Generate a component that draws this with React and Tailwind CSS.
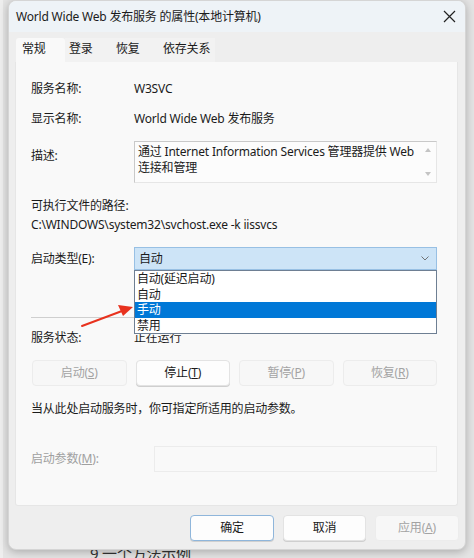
import React from "react";

const font = { fontFamily: '"Noto Sans", "Noto Sans CJK SC", sans-serif' };

function Btn({ children, disabled, primary, className = "" }) {
  return (
    <div
      className={
        "flex items-center justify-center rounded-[4px] border text-[12px] " +
        (disabled
          ? "border-[#ececec] bg-[#f7f7f7] text-[#a3a3a3] "
          : primary
          ? "border-[#8fb6db] bg-[#fdfdfd] text-[#1a1a1a] shadow-[0_1px_0_#d0d0d0] "
          : "border-[#e3e3e3] bg-[#fdfdfd] text-[#1a1a1a] shadow-[0_1px_0_#cfcfcf] ") +
        className
      }
    >
      {children}
    </div>
  );
}

export default function App() {
  return (
    <div
      className="relative h-[558px] w-[474px] overflow-hidden bg-[#e4e4e4] tracking-[-0.2px] text-[#1b1b1b]"
      style={font}
    >
      {/* background fragments */}
      <div className="absolute left-0 top-0 h-full w-[3px] bg-[#eeeeee]" />
      <div className="absolute left-[90px] top-[544px] text-[15px] leading-[18px] text-[#333]">
        9 一个方法示例
      </div>

      {/* window */}
      <div className="relative ml-[8px] flex h-[550px] w-[458px] flex-col overflow-hidden rounded-[8px] border border-[#d5d5d5] bg-[#eeeeee] shadow-[0_2px_8px_rgba(0,0,0,0.25)]">
        {/* title bar */}
        <div className="flex h-[31px] shrink-0 items-center justify-between bg-[#eef3f7] pl-[7px] pr-[9px]">
          <span className="text-[12px] leading-[16px] text-[#1b1b1b]">
            World Wide Web 发布服务 的属性(本地计算机)
          </span>
          <svg width="13" height="13" viewBox="0 0 13 13">
            <path d="M1 1 L12 12 M12 1 L1 12" stroke="#222" strokeWidth="1.2" />
          </svg>
        </div>

        {/* tabs */}
        <div className="ml-[7px] mt-[6px] flex h-[24px] text-[12px]">
          <div className="flex w-[49px] items-center rounded-t-[3px] bg-[#f9f9f9] pb-[2px] pl-[6px]">
            常规
          </div>
          <div className="flex w-[43px] items-center bg-[#f2f2f2] pb-[2px] pl-[4px]">
            登录
          </div>
          <div className="flex w-[47px] items-center bg-[#f2f2f2] pb-[2px] pl-[8px]">
            恢复
          </div>
          <div className="flex w-[60px] items-center bg-[#f2f2f2] pb-[2px] pl-[8px]">
            依存关系
          </div>
        </div>

        {/* panel */}
        <div className="relative ml-[6px] h-[444px] w-[443px] rounded-b-[3px] border border-t-0 border-[#e6e6e6] bg-[#f9f9f9] pl-[15px] pr-[20px] text-[12px] leading-[16px]">
          <div className="mt-[19px] flex h-[16px] items-center">
            <div className="w-[103px]">服务名称:</div>
            <div>W3SVC</div>
          </div>
          <div className="mt-[14px] flex h-[16px] items-center">
            <div className="w-[103px]">显示名称:</div>
            <div>World Wide Web 发布服务</div>
          </div>
          <div className="mt-[14px] flex">
            <div className="mt-[7px] w-[103px]">描述:</div>
            <div className="relative h-[42px] flex-1 border border-[#c9c9c9] border-b-[#e6e6e6] border-r-[#e6e6e6] bg-[#fcfcfc] pl-[3px] pr-[16px] pt-[2px] whitespace-nowrap">
              通过 Internet Information Services 管理器提供 Web
              <br />
              连接和管理
              <div className="absolute right-[5px] top-[6px] h-0 w-0 border-x-[3px] border-b-[4px] border-x-transparent border-b-[#c4c4c4]" />
              <div className="absolute bottom-[6px] right-[5px] h-0 w-0 border-x-[3px] border-t-[4px] border-x-transparent border-t-[#c4c4c4]" />
            </div>
          </div>
          <div className="mt-[15px] h-[16px]">可执行文件的路径:</div>
          <div className="mt-[3px] h-[16px]">C:\WINDOWS\system32\svchost.exe -k iissvcs</div>

          <div className="mt-[14px] flex h-[23px] items-center">
            <div className="w-[103px]">启动类型(E):</div>
            <div className="relative h-[23px] flex-1">
              <div className="flex h-full items-center justify-between border border-[#98c0e4] bg-[#cde4f7] pl-[4px] pr-[7px]">
                <span>自动</span>
                <svg width="8" height="5" viewBox="0 0 8 5">
                  <path d="M0.5 0.5 L4 4 L7.5 0.5" fill="none" stroke="#666" strokeWidth="0.9" />
                </svg>
              </div>
              <div className="absolute left-0 top-[23px] z-10 w-full border border-[#6e7f93] bg-white text-[12px]">
                <div className="h-[15.5px] pl-[2px] leading-[15.5px]">自动(延迟启动)</div>
                <div className="h-[15.5px] pl-[2px] leading-[15.5px]">自动</div>
                <div className="h-[15.5px] bg-[#0078d7] pl-[2px] leading-[15.5px] text-white">手动</div>
                <div className="h-[15.5px] pl-[2px] leading-[15.5px]">禁用</div>
              </div>
            </div>
          </div>

          <div className="mt-[47px] h-px bg-[#cfcfcf]" />

          <div className="mt-[12px] flex h-[16px] items-center">
            <div className="w-[103px]">服务状态:</div>
            <div>正在运行</div>
          </div>

          <div className="mt-[14px] grid h-[26px] grid-cols-4 gap-[9px] pl-[1px]">
            <Btn disabled>启动(<span className="underline">S</span>)</Btn>
            <Btn>停止(<span className="underline">T</span>)</Btn>
            <Btn disabled>暂停(<span className="underline">P</span>)</Btn>
            <Btn disabled>恢复(<span className="underline">R</span>)</Btn>
          </div>

          <div className="mt-[15px] h-[16px]">当从此处启动服务时，你可指定所适用的启动参数。</div>

          <div className="mt-[29px] flex h-[26px] items-center">
            <div className="w-[123px] text-[#a0a0a0]">
              启动参数(<span className="underline">M</span>):
            </div>
            <div className="h-full flex-1 border border-[#ececec] bg-[#f9f9f9]" />
          </div>
        </div>

        {/* footer buttons */}
        <div className="mt-[9px] flex h-[26px] justify-end gap-[9px] pr-[6px]">
          <Btn primary className="w-[84px]">确定</Btn>
          <Btn className="w-[83px]">取消</Btn>
          <Btn disabled className="w-[84px]">
            应用(<span className="underline">A</span>)
          </Btn>
        </div>
      </div>

      {/* red annotation arrow */}
      <svg className="pointer-events-none absolute left-0 top-0" width="474" height="558">
        <line x1="82" y1="326" x2="122" y2="311" stroke="#e8321e" strokeWidth="2" strokeLinecap="round" />
        <path d="M133 307 L118 305 L123 316 Z" fill="#e8321e" />
      </svg>
    </div>
  );
}
